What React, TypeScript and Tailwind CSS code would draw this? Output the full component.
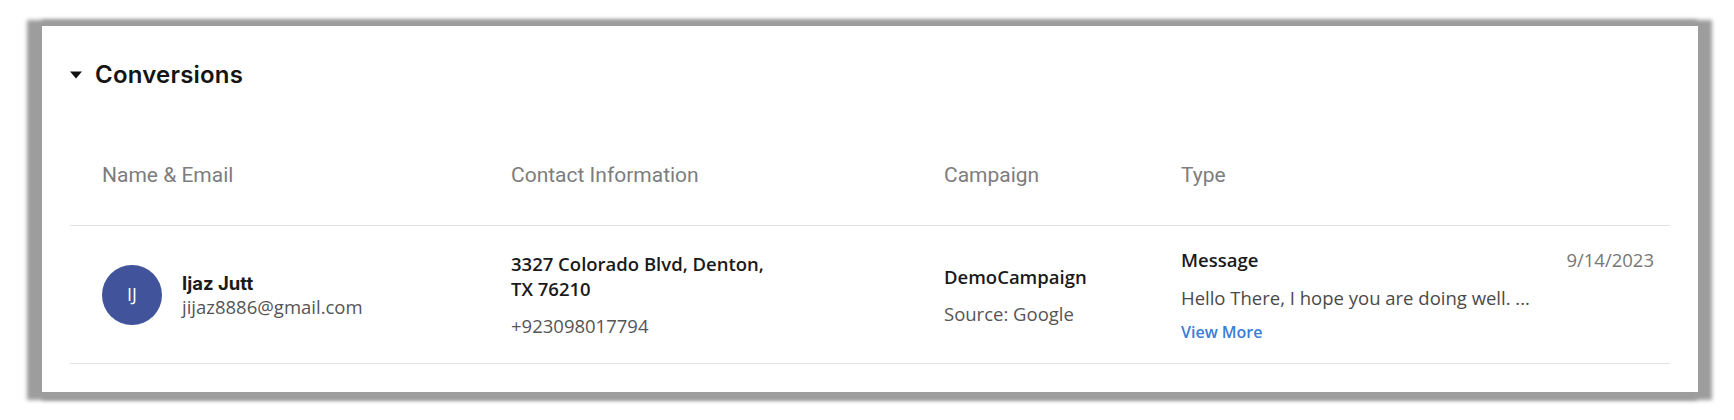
import React from "react";

export default function App() {
  const body = { fontFamily: '"Open Sans", "Noto Sans", sans-serif' };
  const head = { fontFamily: 'Roboto, "Liberation Sans", sans-serif' };
  const geo = { fontFamily: 'Inter, "Noto Sans", sans-serif' };
  return (
    <div className="bg-white w-[1734px] h-[420px] pl-[42px] pr-[36px] pt-[26px]">
      <div className="bg-white shadow-[-8px_1px_4px_7px_#9d9d9d,7px_1px_4px_7px_#9d9d9d] px-[28px] pt-[33px] pb-[28px]">
        <div className="flex items-center h-[32px]" style={geo}>
          <svg width="12" height="8" viewBox="0 0 12 8" className="mr-[13px]">
            <path d="M0 0.5 L12 0.5 L6 7.5 Z" fill="#111" />
          </svg>
          <span className="text-[24px] font-semibold text-[#151515] tracking-[0.2px]">Conversions</span>
        </div>

        <div
          className="mt-[35px] h-[100px] grid grid-cols-[409px_433px_237px_1fr] items-center pl-[32px] pr-[16px] border-b border-[#e3e3e3] text-[21px] text-[#7d7d7d]"
          style={head}
        >
          <div>Name &amp; Email</div>
          <div>Contact Information</div>
          <div>Campaign</div>
          <div>Type</div>
        </div>

        <div
          className="h-[138px] grid grid-cols-[409px_433px_237px_1fr] items-center pl-[32px] pr-[16px] border-b border-[#e3e3e3] text-[18.5px]"
          style={body}
        >
          <div className="flex items-center gap-[20px]">
            <div className="w-[60px] h-[60px] rounded-full bg-[#41539a] flex items-center justify-center text-white text-[18px]">
              IJ
            </div>
            <div className="flex flex-col">
              <span className="leading-[24px] text-[18.5px] font-bold text-[#1a1a1a]" style={geo}>Ijaz Jutt</span>
              <span className="leading-[24px] text-[#555]">jijaz8886@gmail.com</span>
            </div>
          </div>

          <div className="flex flex-col">
            <span className="leading-[25px] font-semibold text-[#1a1a1a]">3327 Colorado Blvd, Denton,</span>
            <span className="leading-[25px] font-semibold text-[#1a1a1a]">TX 76210</span>
            <span className="leading-[25px] mt-[12px] text-[#555]">+923098017794</span>
          </div>

          <div className="flex flex-col">
            <span className="leading-[25px] font-semibold text-[#1a1a1a]">DemoCampaign</span>
            <span className="leading-[25px] mt-[12px] text-[#555]">Source: Google</span>
          </div>

          <div className="flex items-start justify-between">
            <div className="flex flex-col">
              <span className="leading-[25px] font-semibold text-[#1a1a1a]">Message</span>
              <span className="leading-[25px] mt-[13px] text-[#4a4a4a]">Hello There, I hope you are doing well. ...</span>
              <span className="leading-[20px] mt-[12px] text-[16px] font-semibold text-[#3b7dd8]">View More</span>
            </div>
            <span className="leading-[25px] text-[#777]">9/14/2023</span>
          </div>
        </div>
      </div>
    </div>
  );
}
